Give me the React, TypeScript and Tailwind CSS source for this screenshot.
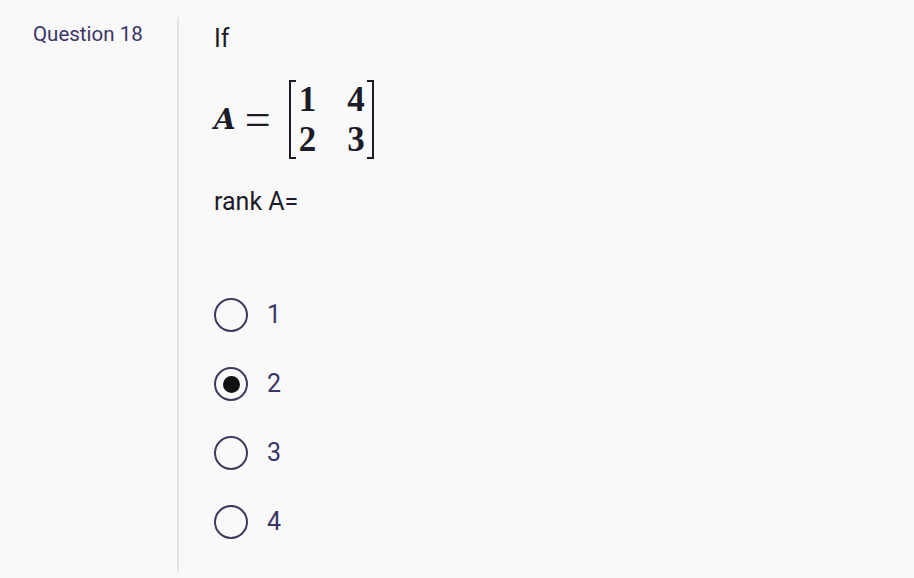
import React from "react";

const options = ["1", "2", "3", "4"];

function Radio({ checked }: { checked: boolean }) {
  return (
    <span className="flex h-[34px] w-[34px] items-center justify-center rounded-full border-2 border-[#3d3a5c]">
      {checked && <span className="h-[17px] w-[17px] rounded-full bg-[#111111]" />}
    </span>
  );
}

export default function App() {
  return (
    <div className="flex h-[578px] w-[914px] bg-[#f9f9f9] font-['Roboto',sans-serif]">
      <div className="w-[177px] shrink-0 pl-[33px] pt-[19px] text-[20.5px] text-[#3b3566]">Question 18</div>
      <div className="mt-[17px] mb-[6px] w-[2px] bg-[#e4e4e4]" />
      <div className="flex flex-col pl-[35px] pt-[23px] text-[#1c1c28]">
        <div className="text-[25px] leading-[32px]">If</div>
        <div className="mt-[25px] flex items-center">
          <span className="font-['DejaVu_Serif',serif] text-[28px] font-bold italic leading-none">A</span>
          <span className="ml-[9px] mr-[18px] font-['Liberation_Serif',serif] text-[46px] leading-none">=</span>
          <div className="flex h-[79px] items-stretch font-['Liberation_Serif',serif]">
            <div className="w-[7px] border-y-2 border-l-2 border-[#1c1c28]" />
            <div className="grid grid-cols-2 gap-x-[31px] pl-[3px] pr-[2px] text-[35px] font-bold leading-[39px]">
              <span>1</span>
              <span>4</span>
              <span>2</span>
              <span>3</span>
            </div>
            <div className="w-[7px] border-y-2 border-r-2 border-[#1c1c28]" />
          </div>
        </div>
        <div className="mt-[27px] text-[25px] leading-[32px]">rank A=</div>
        <div className="mt-[80px] flex flex-col gap-[35px]">
          {options.map((o, i) => (
            <div key={o} className="flex items-center">
              <Radio checked={i === 1} />
              <span className="ml-[19px] text-[25px] leading-[34px] text-[#3b3566]">{o}</span>
            </div>
          ))}
        </div>
      </div>
    </div>
  );
}
